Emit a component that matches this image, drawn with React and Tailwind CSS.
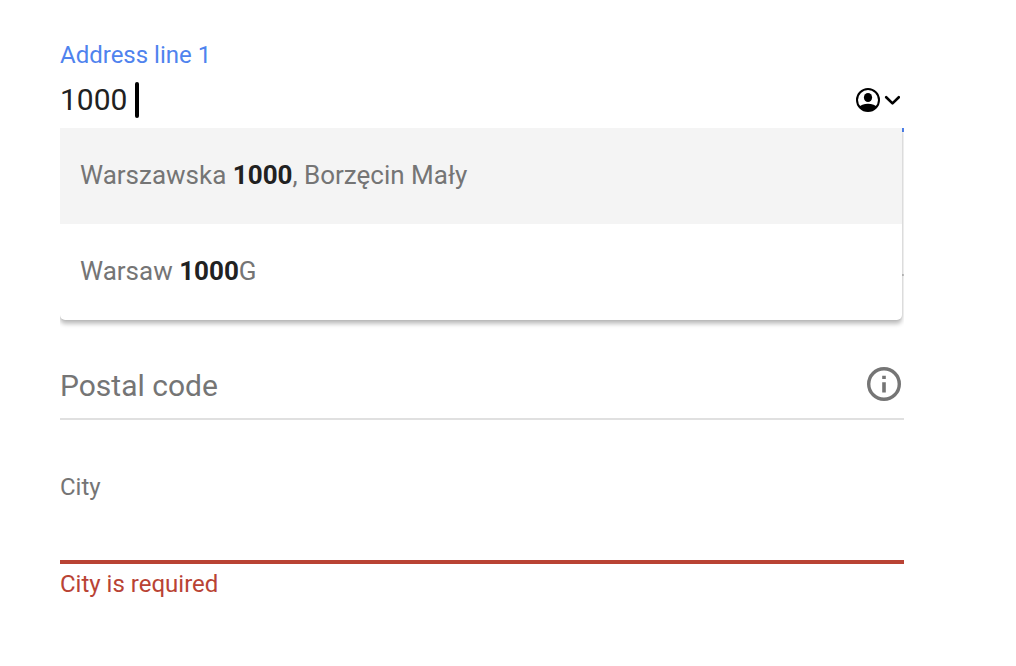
import { useState } from "react";

const suggestions = [
  { id: 1, before: "Warszawska ", match: "1000", after: ", Borzęcin Mały" },
  { id: 2, before: "Warsaw ", match: "1000", after: "G" },
];

function AccountIcon() {
  return (
    <svg viewBox="0 0 24 24" className="size-6" aria-hidden="true">
      <defs>
        <clipPath id="account-clip">
          <circle cx="12" cy="12" r="11" />
        </clipPath>
      </defs>
      <circle cx="12" cy="12" r="11" fill="none" stroke="#000" strokeWidth="2" />
      <ellipse cx="12" cy="9.5" rx="4.1" ry="4.5" fill="#000" />
      <path
        d="M2 20C4.5 16.9 8 15.8 12 15.8S19.500 16.900 22 20V24H2Z"
        fill="#000"
        clipPath="url(#account-clip)"
      />
    </svg>
  );
}

function ChevronIcon() {
  return (
    <svg viewBox="0 0 16 10" className="h-[10px] w-4" aria-hidden="true">
      <path
        d="M2.200 2.200L8.500 8.400L14.800 2.200"
        fill="none"
        stroke="#000"
        strokeWidth="2.6"
        strokeLinecap="round"
        strokeLinejoin="round"
      />
    </svg>
  );
}

function InfoIcon() {
  return (
    <svg viewBox="0 0 34 34" className="size-[34px]" aria-hidden="true">
      <circle cx="17" cy="17" r="15.300" fill="none" stroke="#757575" strokeWidth="3.400" />
      <path d="M15.200 8.700h3.600v3.400h-3.600zM15.200 15.200h3.600v10.200h-3.600z" fill="#757575" />
    </svg>
  );
}

export default function App() {
  const [address, setAddress] = useState("1000 ");

  return (
    <form className="min-h-screen bg-white pt-10 pr-28 pb-16 pl-[60px] font-['Roboto',sans-serif] text-2xl text-[#757575]">
      <div className="relative">
        <label htmlFor="address1" className="block leading-[30px] text-[#4f83ee]">
          Address line 1
        </label>
        <div className="mt-0.5 flex h-15 items-start border-b-4 border-[#4f83ee]">
          <div className="flex h-14 min-w-0 flex-1 items-center">
            <input
              id="address1"
              type="text"
              autoComplete="off"
              value={address}
              onChange={(e) => setAddress(e.target.value)}
              className="h-10 max-w-full text-[30px] leading-10 text-[#212121] caret-transparent outline-none [field-sizing:content]"
            />
            <span className="h-9 w-1 rounded-full bg-black" />
          </div>
          <button type="button" aria-label="Contacts" className="flex h-14 items-center gap-1 pr-1">
            <AccountIcon />
            <ChevronIcon />
          </button>
        </div>
        <ul
          aria-label="Suggestions"
          className="absolute top-22 right-0.5 left-0 z-10 overflow-hidden rounded-b-[5px] bg-white text-[26px] leading-8 shadow-[0_4px_4px_rgba(0,0,0,0.25),0_0_2px_rgba(0,0,0,0.15)] [clip-path:inset(0_-2px_-12px_0)]"
        >
          {suggestions.map((s) => (
            <li key={s.id} className="first:bg-[#f4f4f4]">
              <button type="button" className="block h-24 w-full px-5 pb-0.5 text-left">
                {s.before}
                <b className="font-bold text-[#212121]">{s.match}</b>
                {s.after}
              </button>
            </li>
          ))}
        </ul>
      </div>

      <div className="flex h-36 flex-col justify-end">
        <input
          type="text"
          aria-label="Address line 2"
          className="h-16 w-full border-b-2 border-[#cccccc] outline-none"
        />
      </div>

      <div className="flex h-36 flex-col justify-end">
        <div className="flex items-center border-b-2 border-[#e0e0e0]">
          <input
            type="text"
            aria-label="Postal code"
            placeholder="Postal code"
            className="h-16 min-w-0 flex-1 pb-0.5 text-[30px] outline-none placeholder:text-[#757575]"
          />
          <button type="button" aria-label="Postal code information" className="mr-[3px] mb-1">
            <InfoIcon />
          </button>
        </div>
      </div>

      <div className="pt-13">
        <label htmlFor="city" className="block leading-[30px]">
          City
        </label>
        <input
          id="city"
          type="text"
          aria-invalid="true"
          aria-describedby="city-error"
          className="mt-0.5 block h-15 w-full border-b-4 border-[#b94334] text-[30px] text-[#212121] outline-none"
        />
        <p id="city-error" className="mt-1 leading-8 text-[#b94334]">
          City is required
        </p>
      </div>
    </form>
  );
}
